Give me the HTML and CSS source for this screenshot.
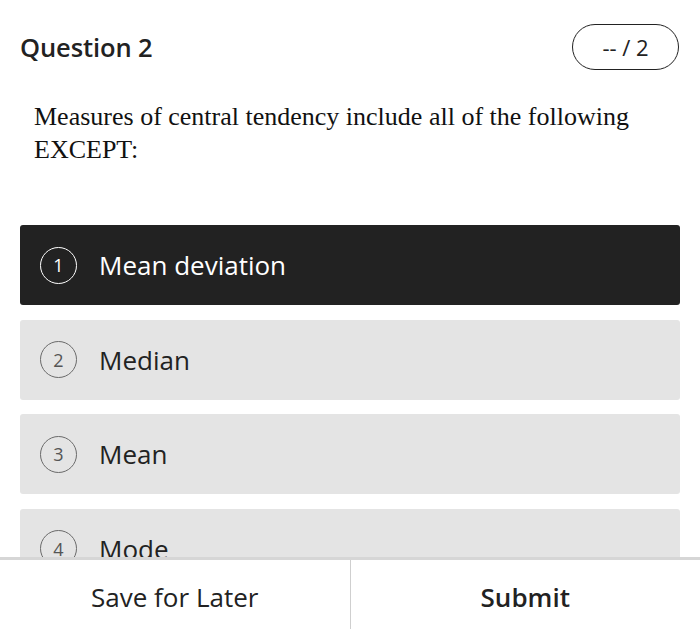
FILE: index.html
```html
<!DOCTYPE html>
<html>
<head>
<meta charset="utf-8">
<link rel="stylesheet" href="styles.css">
</head>
<body>
<div class="page">
  <main class="content">
    <header class="head">
      <h1 class="title">Question 2</h1>
      <div class="score">-- / 2</div>
    </header>
    <p class="prompt">Measures of central tendency include all of the following EXCEPT:</p>
    <ul class="options">
      <li class="option selected"><span class="num">1</span><span class="label">Mean deviation</span></li>
      <li class="option"><span class="num">2</span><span class="label">Median</span></li>
      <li class="option"><span class="num">3</span><span class="label">Mean</span></li>
      <li class="option"><span class="num">4</span><span class="label">Mode</span></li>
    </ul>
  </main>
  <footer class="foot">
    <button class="btn">Save for Later</button>
    <button class="btn primary">Submit</button>
  </footer>
</div>
</body>
</html>
```
FILE: styles.css
```css
* { box-sizing: border-box; }
html, body { margin: 0; padding: 0; height: 100%; background: #fff; }
body { font-family: "Open Sans", "Liberation Sans", sans-serif; color: #222; }
.page { height: 100vh; display: flex; flex-direction: column; overflow: hidden; }
.content { flex: 1; overflow: hidden; padding: 24px 20px 0 20px; }
.head { display: flex; justify-content: space-between; align-items: center; height: 46px; }
.title { margin: 0; font-size: 25.5px; font-weight: 600; letter-spacing: -0.1px; }
.score { width: 107px; height: 46px; border: 1.5px solid #222; border-radius: 23px; display: flex; align-items: center; justify-content: center; font-size: 22px; margin-right: 1px; }
.prompt { margin: 30px 0 0 14px; font-family: "Liberation Serif", "Times New Roman", serif; font-size: 26px; line-height: 33px; color: #111; }
.options { list-style: none; margin: 59px 0 0 0; padding: 0; display: flex; flex-direction: column; gap: 14.6px; }
.option { height: 80px; background: #e4e4e4; border-radius: 3px; display: flex; align-items: center; padding-left: 20px; }
.option.selected { background: #222; color: #fff; }
.num { width: 37px; height: 37px; border: 1.5px solid #6a6a6a; border-radius: 50%; display: flex; align-items: center; justify-content: center; font-size: 18px; color: #555; flex: none; }
.selected .num { border-color: #fff; color: #fff; }
.label { margin-left: 22px; font-size: 26px; }
.foot { flex: none; height: 72px; display: flex; background: #fff; border-top: 3px solid #d6d6d6; }
.btn { flex: 1; border: 0; background: #fff; font-family: "Open Sans", "Liberation Sans", sans-serif; font-size: 26px; color: #222; padding: 4px 0 0 0; }
.btn + .btn { border-left: 1px solid #cfcfcf; }
.btn.primary { font-weight: 600; }
```
